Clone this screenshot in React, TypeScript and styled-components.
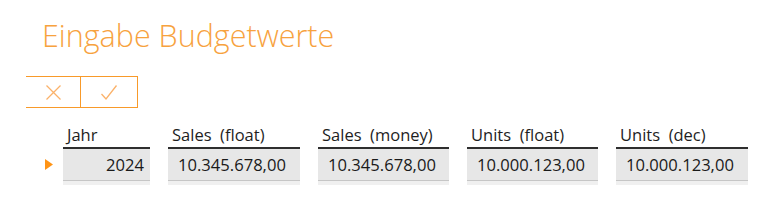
import React from "react";
import styled, { createGlobalStyle } from "styled-components";

const Global = createGlobalStyle`
  html, body { margin: 0; padding: 0; background: #ffffff; }
  body { font-family: "Open Sans", "Noto Sans", "Liberation Sans", sans-serif; }
`;

const Page = styled.div`
  width: 775px;
  height: 206px;
  box-sizing: border-box;
  padding: 15px 0 0 0;
  display: flex;
  flex-direction: column;
`;

const Title = styled.h1`
  margin: 0 0 0 42px;
  font-family: "Open Sans", "Noto Sans", sans-serif;
  font-weight: 300;
  font-size: 30.5px;
  line-height: 40px;
  color: #f7a23e;
  letter-spacing: 0;
`;

const Toolbar = styled.div`
  display: flex;
  margin: 21px 0 0 26px;
  height: 32px;
  box-sizing: border-box;
  border-top: 1px solid #f89a2a;
  border-bottom: 1px solid #f89a2a;
  width: max-content;
`;

const ToolButton = styled.button<{ $w: number }>`
  all: unset;
  box-sizing: border-box;
  width: ${(p) => p.$w}px;
  height: 30px;
  display: flex;
  align-items: center;
  justify-content: center;
  border-right: 1px solid #f89a2a;
`;

const Grid = styled.div`
  display: flex;
  align-items: flex-start;
  margin: 16px 0 0 45px;
  gap: 18px;
`;

const IndicatorCol = styled.div`
  width: 8px;
  margin-right: -8px;
  display: flex;
  flex-direction: column;
`;

const IndicatorHead = styled.div`
  height: 25px;
`;

const IndicatorCell = styled.div`
  height: 36px;
  display: flex;
  align-items: center;
  padding-bottom: 6px;
  box-sizing: border-box;
`;

const Column = styled.div<{ $w: number }>`
  width: ${(p) => p.$w}px;
  display: flex;
  flex-direction: column;
`;

const Header = styled.div`
  height: 25px;
  box-sizing: border-box;
  padding-left: 4px;
  border-bottom: 2px solid #2e2e2e;
  font-family: "Open Sans", "Noto Sans", sans-serif;
  font-size: 16.5px;
  line-height: 21px;
  color: #1e1e1e;
  white-space: pre;
`;

const Value = styled.div`
  height: 36px;
  box-sizing: border-box;
  background: #e7e7e7;
  display: flex;
  flex-direction: column;
`;

const ValueText = styled.div<{ $right?: boolean }>`
  height: 32px;
  box-sizing: border-box;
  border-bottom: 1px solid #c6c6c6;
  display: flex;
  align-items: center;
  justify-content: ${(p) => (p.$right ? "flex-end" : "flex-start")};
  padding: ${(p) => (p.$right ? "0 6px 0 0" : "0 0 0 10px")};
  font-family: "Open Sans", "Noto Sans", sans-serif;
  font-size: 16.6px;
  color: #1a1a1a;
`;

const Under = styled.div`
  flex: 1;
  background: #f0f0f0;
`;

const XIcon = () => (
  <svg width="17" height="17" viewBox="0 0 17 17">
    <path d="M1.5 1.5 L15.5 15.5 M15.5 1.5 L1.5 15.5" stroke="#fbb26a" strokeWidth="1.3" fill="none" />
  </svg>
);

const CheckIcon = () => (
  <svg width="18" height="17" viewBox="0 0 18 17">
    <path d="M1.5 10 L6 15 L16.5 1.5" stroke="#fbb26a" strokeWidth="1.3" fill="none" />
  </svg>
);

const Triangle = () => (
  <svg width="8" height="11" viewBox="0 0 8 11">
    <path d="M0 0 L8 5.5 L0 11 Z" fill="#ff9416" />
  </svg>
);

const columns = [
  { head: "Jahr", value: "2024", w: 87, right: true },
  { head: "Sales  (float)", value: "10.345.678,00", w: 132 },
  { head: "Sales  (money)", value: "10.345.678,00", w: 131 },
  { head: "Units  (float)", value: "10.000.123,00", w: 131 },
  { head: "Units  (dec)", value: "10.000.123,00", w: 132 },
];

export default function App() {
  return (
    <Page>
      <Global />
      <Title>Eingabe Budgetwerte</Title>
      <Toolbar>
        <ToolButton $w={55} aria-label="Abbrechen">
          <XIcon />
        </ToolButton>
        <ToolButton $w={57} aria-label="Speichern">
          <CheckIcon />
        </ToolButton>
      </Toolbar>
      <Grid>
        <IndicatorCol>
          <IndicatorHead />
          <IndicatorCell>
            <Triangle />
          </IndicatorCell>
        </IndicatorCol>
        {columns.map((c) => (
          <Column key={c.head} $w={c.w}>
            <Header>{c.head}</Header>
            <Value>
              <ValueText $right={c.right}>{c.value}</ValueText>
              <Under />
            </Value>
          </Column>
        ))}
      </Grid>
    </Page>
  );
}
